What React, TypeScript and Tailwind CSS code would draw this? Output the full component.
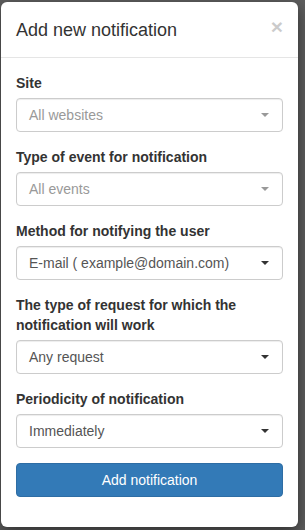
const fields = [
  { label: "Site", value: "All websites", placeholder: true },
  { label: "Type of event for notification", value: "All events", placeholder: true },
  { label: "Method for notifying the user", value: "E-mail ( example@domain.com)", placeholder: false },
  { label: "The type of request for which the notification will work", value: "Any request", placeholder: false },
  { label: "Periodicity of notification", value: "Immediately", placeholder: false },
];

function Select({ value, placeholder }: { value: string; placeholder: boolean }) {
  return (
    <div className="flex h-[34px] items-center justify-between rounded border border-[#ccc] bg-white pl-3 pr-[13px] shadow-[inset_0_1px_1px_rgba(0,0,0,0.075)]">
      <span className={placeholder ? "text-[14px] text-[#999]" : "text-[14px] text-[#555]"}>{value}</span>
      <span
        className={
          placeholder
            ? "h-0 w-0 border-x-[4px] border-t-[4px] border-x-transparent border-t-[#999]"
            : "h-0 w-0 border-x-[4px] border-t-[4px] border-x-transparent border-t-[#333]"
        }
      />
    </div>
  );
}

export default function App() {
  return (
    <div
      className="h-[530px] w-[305px] overflow-hidden bg-[#5e5e5e] pl-px pt-[2px]"
      style={{ fontFamily: '"Liberation Sans", Arial, sans-serif' }}
    >
      <div className="w-[297px] rounded-md bg-white shadow-[0_5px_15px_rgba(0,0,0,0.5)]">
        <div className="flex items-start justify-between border-b border-[#e5e5e5] p-[15px] pb-[14px]">
          <h4 className="text-[18px] leading-[26px] text-[#333]">Add new notification</h4>
          <span className="-mt-[3px] text-[21px] font-bold leading-[26px] text-black opacity-20">×</span>
        </div>
        <div className="px-[15px] pt-[15px] pb-[30px]">
          {fields.map((f) => (
            <div key={f.label} className="mb-[15px]">
              <div className="mb-[5px] text-[14px] font-bold leading-5 text-[#333]">{f.label}</div>
              <Select value={f.value} placeholder={f.placeholder} />
            </div>
          ))}
          <button className="h-[34px] w-full rounded border border-[#2e6da4] bg-[#337ab7] text-[14px] text-white">
            Add notification
          </button>
        </div>
      </div>
    </div>
  );
}
